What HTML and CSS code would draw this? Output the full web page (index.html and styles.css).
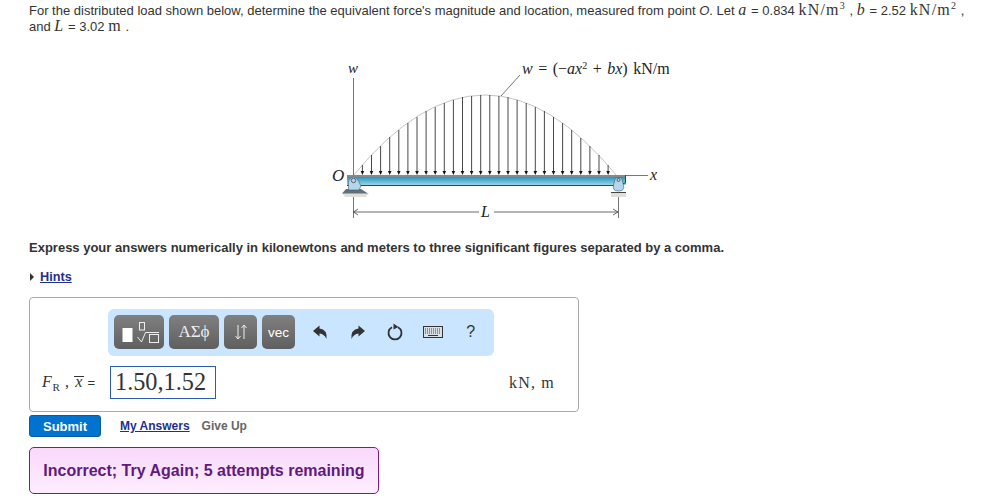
FILE: index.html
```html
<!DOCTYPE html>
<html lang="en">

<head>
    <meta charset="UTF-8">
    <title>Distributed load</title>
    <link rel="stylesheet" href="styles.css">
</head>

<body>
    <p class="problem">For the distributed load shown below, determine the equivalent force's magnitude and location, measured from point <i>O</i>. Let <span class="math"><i>a</i></span> = 0.834 <span class="math">kN/m<sup>3</sup></span> , <span class="math"><i>b</i></span> = 2.52 <span class="math">kN/m<sup>2</sup></span> ,<br>and <span class="math"><i>L</i></span> = 3.02 <span class="math">m</span> .</p>

    <!-- viewBox uses the page coordinates of the figure -->
    <svg class="figure" viewBox="325 55 360 170" width="360" height="170">
        <defs>
            <linearGradient id="beamFill" x1="0" y1="0" x2="0" y2="1">
                <stop offset="0" stop-color="#2a94bd"/>
                <stop offset="0.5" stop-color="#5cb7d4"/>
                <stop offset="1" stop-color="#9ad3e4"/>
            </linearGradient>
        </defs>
        <path class="curve" d="M353 176Q485 14 617 176"/>
        <path class="axis" d="M353.5 78V218M625 175.5H648"/>
        <path class="leader" d="M501 96L520 75"/>
        <path class="arrows" d="M362.4 165V171M371.5 155V171M380.6 146V171M389.7 137V171M398.8 130V171M407.9 123V171M417 117V171M426.1 111V171M435.2 107V171M444.3 103V171M453.4 100V171M462.5 97V171M471.6 96V171M480.7 95V171M489.8 95V171M498.9 96V171M508 97V171M517.1 100V171M526.2 103V171M535.3 107V171M544.4 111V171M553.5 117V171M562.6 123V171M571.7 130V171M580.8 138V171M589.9 146V171M599 155V171M608.1 165V171"/>
        <path class="heads" d="M360.6 171h3.6l-1.8 4zM369.7 171h3.6l-1.8 4zM378.8 171h3.6l-1.8 4zM387.9 171h3.6l-1.8 4zM397 171h3.6l-1.8 4zM406.1 171h3.6l-1.8 4zM415.2 171h3.6l-1.8 4zM424.3 171h3.6l-1.8 4zM433.4 171h3.6l-1.8 4zM442.5 171h3.6l-1.8 4zM451.6 171h3.6l-1.8 4zM460.7 171h3.6l-1.8 4zM469.8 171h3.6l-1.8 4zM478.9 171h3.6l-1.8 4zM488 171h3.6l-1.8 4zM497.1 171h3.6l-1.8 4zM506.2 171h3.6l-1.8 4zM515.3 171h3.6l-1.8 4zM524.4 171h3.6l-1.8 4zM533.5 171h3.6l-1.8 4zM542.6 171h3.6l-1.8 4zM551.7 171h3.6l-1.8 4zM560.8 171h3.6l-1.8 4zM569.9 171h3.6l-1.8 4zM579 171h3.6l-1.8 4zM588.1 171h3.6l-1.8 4zM597.2 171h3.6l-1.8 4zM606.3 171h3.6l-1.8 4z"/>
        <!-- beam -->
        <rect x="347" y="175" width="279" height="2" fill="#7d8b92"/>
        <rect x="347" y="177" width="279" height="8" fill="url(#beamFill)"/>
        <path class="edge" d="M347 185.5H614L625.5 183V175"/>
        <!-- left support -->
        <path class="shadow" d="M342 193H369L366 197H345Z"/>
        <path class="base" d="M342 193.5L346 189H361L368 193.5Z"/>
        <path class="pin" d="M348.5 190V181Q353.5 173 358.5 181L361 186L359 190Z"/>
        <circle class="joint" cx="353.5" cy="180.5" r="2.2"/>
        <!-- right support -->
        <path class="axis" d="M618.5 192V218"/>
        <path class="shadow" d="M611 193H626V197H611Z"/>
        <path class="pin" d="M615.5 178H621.5L623.5 185Q625 191 618.5 191Q612 191 613.5 185Z"/>
        <circle class="joint" cx="618.5" cy="180" r="1.5"/>
        <path class="axis-dark" d="M611 192.5H626"/>
        <!-- dimension -->
        <path class="dim" d="M353 212H479M494 212H618M358 209L353.5 212L358 215M613 209L618 212L613 215"/>
        <text class="label" x="353" y="73" text-anchor="middle" font-size="15">w</text>
        <text class="label" x="332" y="181" font-size="17">O</text>
        <text class="label" x="650" y="180" font-size="16">x</text>
        <text class="label" x="481" y="217" font-size="16">L</text>
        <text class="formula" x="522" y="74" font-size="16"><tspan font-style="italic">w</tspan> = (−<tspan font-style="italic">ax</tspan><tspan font-size="10" dy="-5">2</tspan><tspan dy="5"> + </tspan><tspan font-style="italic">bx</tspan>) kN/m</text>
    </svg>

    <p class="prompt">Express your answers numerically in kilonewtons and meters to three significant figures separated by a comma.</p>

    <p class="hints"><span class="caret"></span><a href="#">Hints</a></p>

    <div class="answer-box">
        <div class="toolbar">
            <button class="tool tool-wide">
                <svg viewBox="0 0 41 26" width="41" height="26">
                    <rect x="3.5" y="9" width="10" height="14" fill="#fff"/>
                    <rect x="20.5" y="3.5" width="5" height="7.5" fill="none" stroke="#eee"/>
                    <path d="M18.5 18L22.5 23L26.5 13.5H40" fill="none" stroke="#eee"/>
                    <rect x="30.5" y="15.5" width="9" height="8" fill="none" stroke="#eee"/>
                </svg>
            </button>
            <button class="tool tool-wide tool-greek">ΑΣϕ</button>
            <button class="tool tool-small">
                <svg viewBox="0 0 16 18" width="16" height="18">
                    <path d="M5 2V16M2.5 13L5 16L7.5 13M11 16V2M8.5 5L11 2L13.5 5" fill="none" stroke="#eee"/>
                </svg>
            </button>
            <button class="tool tool-small tool-vec">vec</button>
            <div class="tool-icons">
                <span class="icon-cell">
                    <svg viewBox="0 0 16 16" width="16" height="16"><path d="M1 7L7.5 1.5V4.5Q15.5 5.5 14.5 15Q12.5 10 7.5 9.5V12.5Z" fill="#333"/></svg>
                </span>
                <span class="icon-cell">
                    <svg viewBox="0 0 16 16" width="16" height="16"><path d="M15 7L8.5 1.5V4.5Q0.5 5.5 1.5 15Q3.5 10 8.5 9.5V12.5Z" fill="#333"/></svg>
                </span>
                <span class="icon-cell">
                    <svg viewBox="0 0 18 18" width="18" height="18"><path d="M6 4.2A6.5 6.5 0 1 0 12 4.2" fill="none" stroke="#333" stroke-width="1.8"/><path d="M7.5 0.5L12.5 4L7.5 6.5Z" fill="#333"/></svg>
                </span>
                <span class="icon-cell">
                    <svg viewBox="0 0 20 12" width="20" height="12"><rect x="0.5" y="0.5" width="19" height="11" fill="#d8e0e6" stroke="#333"/><path d="M2 3H18M2 5H18M2 7H18" stroke="#444" stroke-dasharray="1 1"/><path d="M5 9.5H15" stroke="#333"/></svg>
                </span>
                <span class="icon-cell icon-help">?</span>
            </div>
        </div>
        <div class="answer-row">
            <span class="answer-label"><span class="math"><i>F</i><sub>R</sub> , <span class="overline"><i>x</i></span></span> <span class="equals">=</span></span>
            <span class="answer-input">1.50,1.52</span>
            <span class="units math">kN, m</span>
        </div>
    </div>

    <div class="actions">
        <button class="submit">Submit</button>
        <a class="link-answers" href="#">My Answers</a>
        <span class="give-up">Give Up</span>
    </div>

    <div class="feedback">Incorrect; Try Again; 5 attempts remaining</div>
</body>

</html>
```

FILE: styles.css
```css
/* Estilo global */
html, body {
    height: 498px;
    overflow: hidden;
}

body {
    margin: 0;
    padding: 0 0 0 29px;
    font-family: "Liberation Sans", Arial, sans-serif;
    font-size: 13px;
    color: #333;
    background-color: #fff;
}

.math {
    font-family: "Liberation Serif", serif;
    font-size: 16px;
    letter-spacing: 1.2px;
    line-height: 0;
}

.math sup {
    font-size: 10px;
    line-height: 0;
}

.math sub {
    font-size: 11px;
    line-height: 0;
}

.problem {
    margin: 0;
    padding-top: 3px;
    line-height: 16px;
    white-space: nowrap;
}

/* figura */
.figure {
    display: block;
    margin: 20px 0 0 296px;
}

.curve, .leader, .axis, .axis-dark, .dim, .arrows, .edge, .joint {
    fill: none;
}

.curve {
    stroke: #aaa;
    stroke-width: 0.7;
}

.axis {
    stroke: #777;
    stroke-width: 1;
}

.axis-dark {
    stroke: #444;
    stroke-width: 1;
}

.leader {
    stroke: #555;
    stroke-width: 0.8;
}

.arrows {
    stroke: #333;
    stroke-width: 0.9;
}

.heads {
    fill: #111;
}

.edge {
    stroke: #2f4853;
    stroke-width: 1;
}

.shadow {
    fill: #dfe1d8;
}

.base {
    fill: #5f7079;
}

.pin {
    fill: #b4d6ec;
    stroke: #3f5866;
    stroke-width: 0.6;
}

.joint {
    stroke: #3f4d56;
    stroke-width: 0.8;
}

.dim {
    stroke: #444;
    stroke-width: 0.8;
}

.label, .formula {
    font-family: "Liberation Serif", serif;
    fill: #222;
}

.label {
    font-style: italic;
}

.formula {
    word-spacing: 1.5px;
}

/* texto do enunciado */
.prompt {
    margin: 15px 0 0;
    font-size: 13px;
    font-weight: bold;
    line-height: 16px;
}

.hints {
    display: flex;
    align-items: center;
    margin: 13px 0 0;
    font-size: 12.7px;
    font-weight: bold;
    line-height: 16px;
}

.caret {
    width: 0;
    height: 0;
    margin: 0 6px 0 1px;
    border-left: 4px solid #333;
    border-top: 4px solid transparent;
    border-bottom: 4px solid transparent;
}

.hints a, .link-answers {
    color: #1f2f8f;
    text-decoration: underline;
}

/* caixa da resposta */
.answer-box {
    box-sizing: border-box;
    width: 550px;
    height: 115px;
    margin-top: 12px;
    padding: 11px 0 0 78px;
    border: 1px solid #aaa;
    border-radius: 4px;
}

.toolbar {
    display: flex;
    align-items: center;
    gap: 5px;
    box-sizing: border-box;
    width: 386px;
    height: 47px;
    padding: 0 0 1px 6px;
    background-color: #c9e5ff;
    border-radius: 6px;
}

.tool {
    display: flex;
    align-items: center;
    justify-content: center;
    height: 34px;
    padding: 0;
    border: none;
    border-radius: 5px;
    color: #eee;
    background: linear-gradient(#808080, #5f5f5f);
}

.tool-wide {
    width: 50px;
}

.tool-small {
    width: 33px;
}

.tool-greek {
    font-family: "Liberation Serif", serif;
    font-size: 17px;
}

.tool-vec {
    font-family: "Liberation Sans", sans-serif;
    font-size: 13.5px;
    color: #fff;
}

.tool-icons {
    display: flex;
    margin-left: 1px;
}

.icon-cell {
    display: flex;
    align-items: center;
    justify-content: center;
    width: 37.7px;
    height: 24px;
}

.icon-help {
    font-size: 16px;
    color: #333;
}

.answer-row {
    display: flex;
    align-items: center;
    margin-top: 10px;
}

.answer-label {
    flex: none;
    box-sizing: border-box;
    width: 80px;
    margin-left: -78px;
    padding-left: 12px;
    white-space: nowrap;
}

.answer-label .math {
    letter-spacing: 0.6px;
}

.overline {
    display: inline-block;
    padding: 0 1px;
    border-top: 1px solid #333;
    line-height: 9px;
}

.equals {
    font-size: 13px;
}

.answer-input {
    box-sizing: border-box;
    width: 106px;
    height: 33px;
    padding-left: 4px;
    border: 1px solid #2a5db0;
    font-family: "Liberation Serif", serif;
    font-size: 24.3px;
    line-height: 30px;
    color: #333;
}

.units {
    margin-left: 293px;
}

/* ações */
.actions {
    display: flex;
    align-items: center;
    margin-top: 3px;
    font-size: 12px;
    font-weight: bold;
}

.submit {
    box-sizing: border-box;
    width: 72px;
    height: 22px;
    padding: 0;
    border: 1px solid #0b5c9e;
    border-radius: 3px;
    background-color: #0072cf;
    color: #fff;
    font-family: "Liberation Sans", sans-serif;
    font-size: 13px;
    font-weight: bold;
}

.link-answers {
    margin-left: 19px;
}

.give-up {
    margin-left: 12px;
    color: #666;
}

.feedback {
    box-sizing: border-box;
    width: 350px;
    height: 47px;
    margin-top: 10px;
    border: 1px solid #7a1a8c;
    border-radius: 5px;
    background: linear-gradient(#f9d8fc, #fdeeff);
    color: #5f1a7d;
    font-size: 16px;
    font-weight: bold;
    line-height: 45px;
    text-align: center;
}
```
